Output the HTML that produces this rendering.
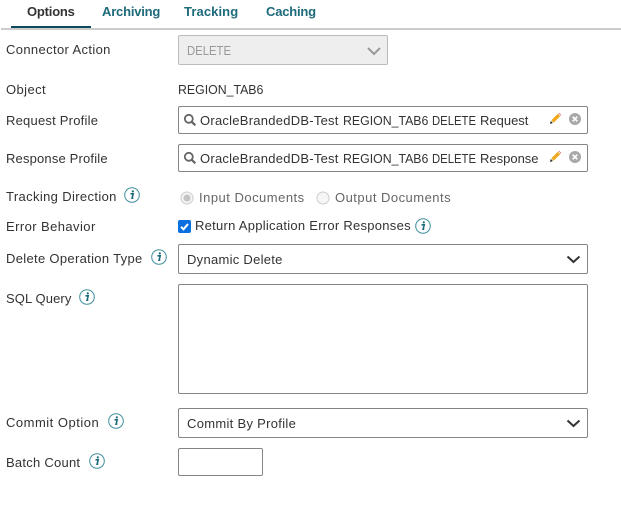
<!DOCTYPE html>
<html>
<head>
<meta charset="utf-8">
<style>
html,body{margin:0;padding:0;background:#fff;}
body{width:621px;height:509px;position:relative;overflow:hidden;font-family:"Liberation Sans",sans-serif;font-size:13px;color:#333;}
.t{position:absolute;white-space:nowrap;line-height:16px;letter-spacing:.42px;}
.tab{color:#1d6a7a;font-weight:bold;top:4px;letter-spacing:-.2px;}
.c{letter-spacing:0;transform-origin:0 50%;}
.box{position:absolute;box-sizing:border-box;border:1px solid #858585;border-radius:2px;background:#fff;}
svg{position:absolute;display:block;}
</style>
</head>
<body>
<div class="t tab" style="left:27px;color:#333;">Options</div>
<div class="t tab" style="left:102px;">Archiving</div>
<div class="t tab" style="left:184px;letter-spacing:.1px;">Tracking</div>
<div class="t tab" style="left:266px;">Caching</div>
<div style="position:absolute;left:1px;top:28px;width:620px;height:2px;background:#ccc;"></div>
<div style="position:absolute;left:11px;top:26px;width:80px;height:2px;background:#0f4a5c;"></div>

<div class="t" style="left:6px;top:42px;letter-spacing:.36px;">Connector Action</div>
<div class="box" style="left:178px;top:35px;width:210px;height:30px;background:#eee;border-color:#bbb;"></div>
<div class="t c" style="left:187px;top:43px;color:#999;transform:scaleX(.87);">DELETE</div>
<svg style="left:366px;top:46px;" width="16" height="10" viewBox="0 0 16 10"><path d="M2 2l6 6 6-6" fill="none" stroke="#999" stroke-width="2"/></svg>

<div class="t" style="left:6px;top:82px;">Object</div>
<div class="t c" style="left:178px;top:82px;transform:scaleX(.948);">REGION_TAB6</div>

<div class="t" style="left:6px;top:113px;letter-spacing:.22px;">Request Profile</div>
<div class="box" style="left:178px;top:106px;width:410px;height:28px;"></div>
<svg style="left:183px;top:113px;" width="14" height="14" viewBox="0 0 14 14"><circle cx="5.800" cy="5.800" r="4" fill="none" stroke="#666" stroke-width="1.800"/><path d="M8.700 8.700l3.600 3.600" stroke="#666" stroke-width="2.200"/></svg>
<div class="t" style="left:200px;top:113px;letter-spacing:.25px;">OracleBrandedDB-Test</div>
<div class="t c" style="left:343px;top:113px;transform:scaleX(.948);">REGION_TAB6</div>
<div class="t c" style="left:432px;top:113px;transform:scaleX(.87);">DELETE</div>
<div class="t c" style="left:480px;top:113px;">Request</div>
<svg style="left:549px;top:112px;" width="13" height="13" viewBox="0 0 13 13"><path d="M1 12l.8-3L3.800 11z" fill="#222"/><path d="M2.300 8.300L8.800 1.800l2.400 2.400-6.500 6.500z" fill="#f0a820"/><path d="M9.400 1.200l.7-.5 2.200 2.200-.5.8z" fill="#e87070"/></svg>
<svg style="left:569px;top:113px;" width="12" height="12" viewBox="0 0 12 12"><circle cx="6" cy="6" r="6" fill="#a8a8a8"/><path d="M3.700 3.700l4.600 4.600M8.300 3.700l-4.600 4.600" stroke="#fff" stroke-width="1.700"/></svg>

<div class="t" style="left:6px;top:151px;letter-spacing:.17px;">Response Profile</div>
<div class="box" style="left:178px;top:144px;width:410px;height:28px;"></div>
<svg style="left:183px;top:151px;" width="14" height="14" viewBox="0 0 14 14"><circle cx="5.800" cy="5.800" r="4" fill="none" stroke="#666" stroke-width="1.800"/><path d="M8.700 8.700l3.600 3.600" stroke="#666" stroke-width="2.200"/></svg>
<div class="t" style="left:200px;top:151px;letter-spacing:.25px;">OracleBrandedDB-Test</div>
<div class="t c" style="left:343px;top:151px;transform:scaleX(.948);">REGION_TAB6</div>
<div class="t c" style="left:432px;top:151px;transform:scaleX(.87);">DELETE</div>
<div class="t c" style="left:480px;top:151px;">Response</div>
<svg style="left:549px;top:150px;" width="13" height="13" viewBox="0 0 13 13"><path d="M1 12l.8-3L3.800 11z" fill="#222"/><path d="M2.300 8.300L8.800 1.800l2.400 2.400-6.500 6.500z" fill="#f0a820"/><path d="M9.400 1.200l.7-.5 2.200 2.200-.5.8z" fill="#e87070"/></svg>
<svg style="left:569px;top:151px;" width="12" height="12" viewBox="0 0 12 12"><circle cx="6" cy="6" r="6" fill="#a8a8a8"/><path d="M3.700 3.700l4.600 4.600M8.300 3.700l-4.600 4.600" stroke="#fff" stroke-width="1.700"/></svg>

<div class="t" style="left:6px;top:189px;letter-spacing:.36px;">Tracking Direction</div>
<svg style="left:124px;top:187px;" width="16" height="16" viewBox="0 0 16 16"><circle cx="8" cy="8" r="7.300" fill="none" stroke="#3d8f9c" stroke-width="1"/><circle cx="8.800" cy="4.400" r="1.100" fill="#1d6a7a"/><path d="M6.500 6.800h2.700l-1.100 4.400h1.200" fill="none" stroke="#1d6a7a" stroke-width="1.600"/></svg>
<svg style="left:180px;top:191px;" width="14" height="14" viewBox="0 0 14 14"><circle cx="7" cy="7" r="6" fill="#f4f4f4" stroke="#ccc"/><circle cx="7" cy="7" r="3.500" fill="#c4c4c4"/></svg>
<div class="t" style="left:199px;top:190px;color:#666;letter-spacing:.49px;">Input Documents</div>
<svg style="left:316px;top:191px;" width="14" height="14" viewBox="0 0 14 14"><circle cx="7" cy="7" r="6" fill="#f6f6f6" stroke="#ccc"/></svg>
<div class="t" style="left:335px;top:190px;color:#666;letter-spacing:.48px;">Output Documents</div>

<div class="t" style="left:6px;top:219px;">Error Behavior</div>
<svg style="left:178px;top:220px;" width="13" height="13" viewBox="0 0 13 13"><rect width="13" height="13" rx="2" fill="#0a70e0"/><path d="M3 6.800l2.500 2.500L10 4" fill="none" stroke="#fff" stroke-width="2"/></svg>
<div class="t" style="left:195px;top:218px;letter-spacing:.27px;">Return Application Error Responses</div>
<svg style="left:415px;top:218px;" width="16" height="16" viewBox="0 0 16 16"><circle cx="8" cy="8" r="7.300" fill="none" stroke="#3d8f9c" stroke-width="1"/><circle cx="8.800" cy="4.400" r="1.100" fill="#1d6a7a"/><path d="M6.500 6.800h2.700l-1.100 4.400h1.200" fill="none" stroke="#1d6a7a" stroke-width="1.600"/></svg>

<div class="t" style="left:6px;top:251px;letter-spacing:.32px;">Delete Operation Type</div>
<svg style="left:151px;top:249px;" width="16" height="16" viewBox="0 0 16 16"><circle cx="8" cy="8" r="7.300" fill="none" stroke="#3d8f9c" stroke-width="1"/><circle cx="8.800" cy="4.400" r="1.100" fill="#1d6a7a"/><path d="M6.500 6.800h2.700l-1.100 4.400h1.200" fill="none" stroke="#1d6a7a" stroke-width="1.600"/></svg>
<div class="box" style="left:178px;top:244px;width:410px;height:30px;"></div>
<div class="t" style="left:187px;top:252px;letter-spacing:.28px;">Dynamic Delete</div>
<svg style="left:566px;top:255px;" width="15" height="9" viewBox="0 0 15 9"><path d="M1.500 1.500l6 5.500 6-5.500" fill="none" stroke="#333" stroke-width="2"/></svg>

<div class="t" style="left:6px;top:291px;letter-spacing:.1px;">SQL Query</div>
<svg style="left:79px;top:289px;" width="16" height="16" viewBox="0 0 16 16"><circle cx="8" cy="8" r="7.300" fill="none" stroke="#3d8f9c" stroke-width="1"/><circle cx="8.800" cy="4.400" r="1.100" fill="#1d6a7a"/><path d="M6.500 6.800h2.700l-1.100 4.400h1.200" fill="none" stroke="#1d6a7a" stroke-width="1.600"/></svg>
<div class="box" style="left:178px;top:284px;width:410px;height:110px;"></div>

<div class="t" style="left:6px;top:415px;letter-spacing:.5px;">Commit Option</div>
<svg style="left:108px;top:413px;" width="16" height="16" viewBox="0 0 16 16"><circle cx="8" cy="8" r="7.300" fill="none" stroke="#3d8f9c" stroke-width="1"/><circle cx="8.800" cy="4.400" r="1.100" fill="#1d6a7a"/><path d="M6.500 6.800h2.700l-1.100 4.400h1.200" fill="none" stroke="#1d6a7a" stroke-width="1.600"/></svg>
<div class="box" style="left:178px;top:408px;width:410px;height:30px;"></div>
<div class="t" style="left:187px;top:416px;letter-spacing:.3px;">Commit By Profile</div>
<svg style="left:566px;top:419px;" width="15" height="9" viewBox="0 0 15 9"><path d="M1.500 1.500l6 5.500 6-5.500" fill="none" stroke="#333" stroke-width="2"/></svg>

<div class="t" style="left:6px;top:455px;letter-spacing:.25px;">Batch Count</div>
<svg style="left:89px;top:453px;" width="16" height="16" viewBox="0 0 16 16"><circle cx="8" cy="8" r="7.300" fill="none" stroke="#3d8f9c" stroke-width="1"/><circle cx="8.800" cy="4.400" r="1.100" fill="#1d6a7a"/><path d="M6.500 6.800h2.700l-1.100 4.400h1.200" fill="none" stroke="#1d6a7a" stroke-width="1.600"/></svg>
<div class="box" style="left:178px;top:448px;width:85px;height:28px;"></div>
</body>
</html>
